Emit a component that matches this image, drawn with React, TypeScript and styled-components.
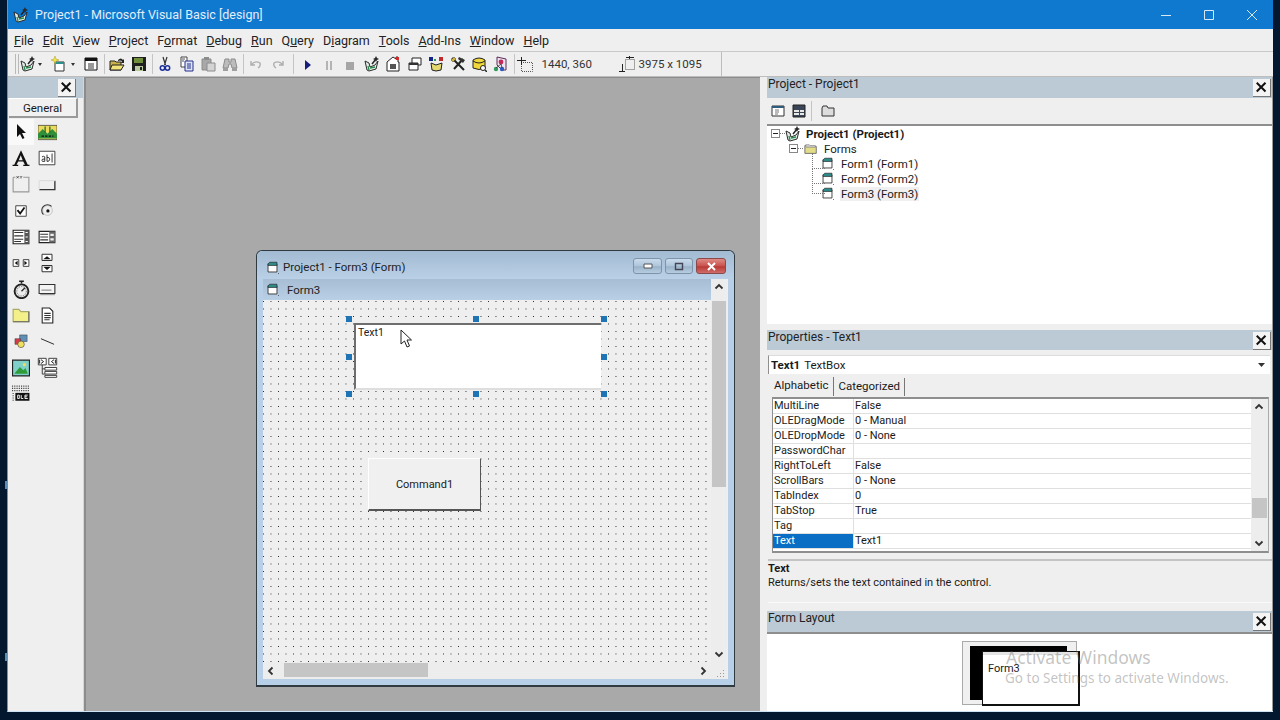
import React from 'react';
import styled, { createGlobalStyle } from 'styled-components';

const uiFont = '"Roboto", "Liberation Sans", sans-serif';

const GlobalStyle = createGlobalStyle`
  html, body {
    margin: 0;
    width: 1280px;
    height: 720px;
    overflow: hidden;
    background: #03182f;
    font-family: ${uiFont};
    color: #1a1a1a;
  }
  * { box-sizing: border-box; }
`;

const Desktop = styled.div`
  position: relative;
  width: 1280px;
  height: 720px;
  padding: 0 7px 8px;
  background: #03182f;
`;

const EdgeGlint = styled.div`
  position: absolute;
  left: 5px;
  top: ${p => p.$top}px;
  width: 2px;
  height: 8px;
  background: #5a8db8;
`;

const AppWindow = styled.div`
  position: relative;
  height: 712px;
  display: flex;
  flex-direction: column;
  background: #efefef;
  border-left: 1px solid #4f9bd8;
  border-bottom: 1px solid #cfe2f3;
`;

const TitleBar = styled.div`
  height: 29px;
  flex: none;
  display: flex;
  align-items: center;
  padding-left: 5px;
  background: #0f78cf;
  color: #e3eef8;
  font-size: 12.5px;
`;

const TitleText = styled.span`
  flex: 1;
  margin-left: 6px;
`;

const WinButton = styled.div`
  width: 43px;
  height: 29px;
  display: flex;
  align-items: center;
  justify-content: center;
`;

const MenuBar = styled.div`
  height: 23px;
  flex: none;
  display: flex;
  align-items: center;
  padding-left: 6px;
  gap: 9px;
  font-size: 12.5px;
  color: #222;
  border-bottom: 1px solid #c9c9c9;
`;

const Mnemonic = styled.span`
  text-decoration: underline;
  text-underline-offset: 1px;
`;

const ToolBar = styled.div`
  height: 25px;
  flex: none;
  display: flex;
  align-items: center;
  padding-left: 7px;
  border-bottom: 1px solid #bdbdbd;
  font-size: 11px;
  color: #333;
`;

const ToolGroup = styled.div`
  width: 707px;
  height: 24px;
  display: flex;
  align-items: center;
  border-right: 1px solid #bdbdbd;
`;

const Grip = styled.div`
  width: 4px;
  height: 20px;
  border-left: 1px solid #b8b8b8;
  border-right: 1px solid #b8b8b8;
`;

const ToolSep = styled.div`
  width: 1px;
  height: 20px;
  flex: none;
  margin: 0 ${p => p.$gap ?? 3}px;
  background: #c4c4c4;
`;

const ToolButton = styled.div`
  width: ${p => p.$w ?? 21.5}px;
  height: 22px;
  flex: none;
  display: flex;
  align-items: center;
  justify-content: center;
`;

const DropArrow = styled.div`
  width: 0;
  height: 0;
  flex: none;
  margin: 0 5px 0 1px;
  border: 2.5px solid transparent;
  border-top: 3px solid #333;
  border-bottom: none;
`;

const Readout = styled.div`
  width: ${p => p.$w}px;
  flex: none;
  display: flex;
  align-items: center;
  gap: ${p => p.$gap}px;
  font-size: 11.5px;
  white-space: nowrap;
`;

const Workspace = styled.div`
  flex: 1;
  min-height: 0;
  display: flex;
`;

const Toolbox = styled.div`
  width: 76px;
  flex: none;
  display: flex;
  flex-direction: column;
  border-right: 1px solid #d6d6d6;
`;

const DockHeader = styled.div`
  height: ${p => p.$h ?? 21}px;
  flex: none;
  display: flex;
  align-items: flex-start;
  justify-content: space-between;
  padding: 0 ${p => p.$right ?? 1}px 0 1px;
  background: #bccad6;
  font-size: 12px;
  line-height: 14px;
  color: #222;
`;

const CloseBox = styled.div`
  width: 18px;
  height: 18px;
  margin-top: 2px;
  flex: none;
  display: flex;
  align-items: center;
  justify-content: center;
  background: #f4f4f4;
  border-right: 1px solid #777;
  border-bottom: 1px solid #777;
`;

const GeneralTab = styled.div`
  width: 69px;
  height: 20px;
  margin-left: 1px;
  flex: none;
  display: flex;
  align-items: center;
  justify-content: center;
  font-size: 11.5px;
  background: #f1f1f1;
  border-top: 1px solid #fff;
  border-right: 2px solid #9a9a9a;
  border-bottom: 2px solid #9a9a9a;
`;

const ToolGrid = styled.div`
  display: grid;
  grid-template-columns: 26px 26px;
  grid-auto-rows: 26.2px;
  padding-top: 1px;
`;

const ToolCell = styled.div`
  display: flex;
  align-items: center;
  justify-content: center;
  background: ${p => (p.$active ? '#f9f9f9' : 'transparent')};
`;

const MdiArea = styled.div`
  position: relative;
  width: 676px;
  flex: none;
  background: #a9a9a9;
  border-left: 2px solid #8c8c8c;
  border-top: 1px solid #8c8c8c;
`;

const FormWindow = styled.div`
  position: absolute;
  left: 170px;
  top: 172px;
  width: 479px;
  height: 437px;
  display: flex;
  flex-direction: column;
  padding: 0 6px 6px;
  background: #b7d0e8;
  border: 1px solid #2f3b40;
  border-bottom-width: 2px;
  border-radius: 6px 6px 0 0;
`;

const FormTitle = styled.div`
  height: 28px;
  flex: none;
  display: flex;
  align-items: center;
  gap: 4px;
  margin: 0 -6px;
  padding: 4px 0 0 9px;
  font-size: 11.5px;
  color: #222;
  background: linear-gradient(#a3bbd2, #b9d0e7);
  border-radius: 6px 6px 0 0;
`;

const CaptionButtons = styled.div`
  margin: 0 8px 2px auto;
  display: flex;
  gap: 3px;
`;

const Caption = styled.div`
  width: ${p => p.$w}px;
  height: 16px;
  display: flex;
  align-items: center;
  justify-content: center;
  border: 1px solid ${p => (p.$close ? '#8a4a4a' : '#7d93aa')};
  border-radius: 3px;
  background: ${p =>
    p.$close
      ? 'linear-gradient(#e08a85 0%, #c9524d 50%, #b93a36 55%, #cf6d68 100%)'
      : 'linear-gradient(#c9dbec 0%, #aec5da 50%, #9ab3ca 55%, #b7cde0 100%)'};
`;

const FormBody = styled.div`
  flex: 1;
  min-height: 0;
  display: grid;
  grid-template-columns: 448px 16px;
  grid-template-rows: 1fr 17px;
  background: #efefef;
`;

const FormColumn = styled.div`
  display: flex;
  flex-direction: column;
  min-height: 0;
`;

const FormCaption = styled.div`
  height: 21px;
  flex: none;
  display: flex;
  align-items: center;
  gap: 8px;
  padding-left: 3px;
  font-size: 11.5px;
  color: #222;
  background: linear-gradient(#a6bdd4, #b9cfe5);
`;

const DesignCanvas = styled.div`
  position: relative;
  flex: 1;
  background-color: #efefef;
  background-image: radial-gradient(circle at 0.5px 0.5px, #222 0.5px, transparent 0.55px);
  background-size: 7.5px 7.5px;
  background-position: 0 1px;
`;

const TextBox = styled.div`
  position: absolute;
  left: 91px;
  top: 23px;
  width: 247px;
  height: 67px;
  padding: 1px 2px;
  font-size: 10.5px;
  line-height: 14px;
  color: #222;
  background: #fff;
  border-top: 2px solid #6e6e6e;
  border-left: 2px solid #6e6e6e;
  border-bottom: 2px solid #dedede;
`;

const Handle = styled.div`
  position: absolute;
  width: 6px;
  height: 6px;
  background: #1f74b5;
`;

const CommandBtn = styled.div`
  position: absolute;
  left: 105px;
  top: 158px;
  width: 113px;
  height: 53px;
  display: flex;
  align-items: center;
  justify-content: center;
  font-size: 11px;
  background: #f0f0f0;
  border-top: 1px solid #fff;
  border-left: 1px solid #fff;
  border-right: 1px solid #555;
  border-bottom: 2px solid #555;
`;

const CursorMark = styled.div`
  position: absolute;
  left: 137px;
  top: 29px;
  width: 13px;
  height: 20px;
`;

const VScroll = styled.div`
  display: flex;
  flex-direction: column;
  background: #ededed;
`;

const ScrollEnd = styled.div`
  width: ${p => p.$w ?? 16}px;
  height: ${p => p.$h ?? 16}px;
  flex: none;
  display: flex;
  align-items: center;
  justify-content: center;
`;

const VTrack = styled.div`
  flex: 1;
  padding: ${p => p.$top}px 1px ${p => p.$bottom}px;
  display: flex;
`;

const VThumb = styled.div`
  flex: 1;
  background: #c5c5c5;
`;

const HScroll = styled.div`
  display: flex;
  align-items: center;
  background: #ededed;
`;

const HTrack = styled.div`
  flex: 1;
  height: 100%;
  padding: 1px 0;
`;

const HThumb = styled.div`
  width: 144px;
  height: 14px;
  margin-left: 5px;
  background: #c5c5c5;
`;

const Corner = styled.div`
  display: flex;
  align-items: flex-end;
  justify-content: flex-end;
  background: #ededed;
  padding: 2px;
`;

const Splitter = styled.div`
  width: 7px;
  flex: none;
`;

const DockColumn = styled.div`
  flex: 1;
  min-width: 0;
  display: flex;
  flex-direction: column;
  border-right: 1px solid #9a9a9a;
`;

const ProjectPanel = styled.div`
  height: 253px;
  flex: none;
  display: flex;
  flex-direction: column;
`;

const PanelTools = styled.div`
  height: 26px;
  flex: none;
  display: flex;
  align-items: center;
`;

const TreeView = styled.div`
  height: 200px;
  flex: none;
  background: #fff;
  border-top: 2px solid #8e8e8e;
  font-size: 11.5px;
  overflow: hidden;
`;

const TreeRow = styled.div`
  position: relative;
  height: 15px;
  display: flex;
  align-items: center;
  padding-left: ${p => p.$indent}px;
  gap: ${p => p.$gap ?? 6}px;
  font-weight: ${p => (p.$bold ? 700 : 400)};
  &::before {
    content: ${p => (p.$branch ? '""' : 'none')};
    position: absolute;
    left: 45px;
    top: -3px;
    width: 12px;
    height: ${p => (p.$last ? '10px' : '15px')};
    border-left: 1px dotted #777;
    border-bottom: 1px dotted #777;
  }
`;

const Expander = styled.div`
  position: relative;
  width: 9px;
  height: 9px;
  flex: none;
  display: flex;
  align-items: center;
  justify-content: center;
  background: #fff;
  border: 1px solid #888;
  &::after {
    content: "";
    width: 5px;
    height: 1px;
    background: #222;
  }
  &::before {
    content: "";
    position: absolute;
    left: 8px;
    top: 3px;
    width: 5px;
    border-top: 1px dotted #777;
  }
`;

const RowLabel = styled.span`
  padding: 0 1px;
  white-space: nowrap;
  background: ${p => (p.$selected ? '#f0f0f0' : 'transparent')};
`;

const PropertiesPanel = styled.div`
  height: 281px;
  flex: none;
  display: flex;
  flex-direction: column;
`;

const ObjectCombo = styled.div`
  height: 19px;
  margin: 5px 2px 0 1px;
  flex: none;
  display: flex;
  align-items: center;
  justify-content: space-between;
  padding: 0 4px 0 2px;
  background: #fff;
  border-left: 1px solid #8e8e8e;
  border-top: 1px solid #dcdcdc;
  font-size: 11.5px;
`;

const ComboBold = styled.b`
  font-weight: 700;
  margin-right: 4px;
`;

const Tabs = styled.div`
  height: 20px;
  margin: 3px 0 0 5px;
  flex: none;
  display: flex;
  align-items: flex-start;
  font-size: 11.5px;
`;

const Tab = styled.div`
  height: ${p => (p.$active ? 19 : 18)}px;
  padding: 0 ${p => (p.$active ? '5px 0 2px' : '4px')};
  line-height: 16px;
  margin-top: ${p => (p.$active ? 0 : 1)}px;
  border-right: 1px solid #777;
`;

const GridFrame = styled.div`
  height: 156px;
  margin: 0 3px 0 5px;
  flex: none;
  display: flex;
  background: #fff;
  border-top: 2px solid #8e8e8e;
  border-left: 1px solid #8e8e8e;
  border-right: 1px solid #aaa;
  border-bottom: 2px solid #8e8e8e;
`;

const GridBody = styled.div`
  flex: 1;
  min-width: 0;
`;

const PropRow = styled.div`
  height: 15px;
  display: grid;
  grid-template-columns: 81px 1fr;
  font-size: 11px;
  line-height: 14px;
  border-bottom: 1px solid #dfdfdf;
`;

const PropName = styled.div`
  padding-left: 1px;
  border-right: 1px solid #dfdfdf;
  white-space: nowrap;
  color: ${p => (p.$selected ? '#fff' : '#222')};
  background: ${p => (p.$selected ? '#0a6fc4' : 'transparent')};
`;

const PropValue = styled.div`
  padding-left: 1px;
  white-space: nowrap;
`;

const GridScroll = styled(VScroll)`
  width: 17px;
  flex: none;
`;

const Description = styled.div`
  height: 44px;
  margin: 6px 0 0 1px;
  flex: none;
  padding: 1px 0 0;
  font-size: 11px;
  line-height: 14px;
  border-top: 2px solid #c4c4c4;
  border-bottom: 1px solid #fafafa;
`;

const DescTitle = styled.b`
  display: block;
  font-weight: 700;
`;

const FormLayoutPanel = styled.div`
  flex: 1;
  min-height: 0;
  display: flex;
  flex-direction: column;
`;

const LayoutCanvas = styled.div`
  position: relative;
  flex: 1;
  background: #fff;
  border-top: 2px solid #8e8e8e;
`;

const Monitor = styled.div`
  position: absolute;
  left: 195px;
  top: 7px;
  width: 115px;
  height: 64px;
  padding: 4px 9px 4px 7px;
  background: #f0f0f0;
  border: 1px solid #aaa;
`;

const MonitorScreen = styled.div`
  width: 100%;
  height: 100%;
  background: #000;
`;

const MiniForm = styled.div`
  position: absolute;
  left: 215px;
  top: 17px;
  width: 98px;
  height: 55px;
  padding: 10px 0 0 5px;
  font-size: 11px;
  line-height: 14px;
  background: #fff;
  border: 1px solid #111;
  border-bottom-width: 2px;
  border-right-width: 2px;
  box-shadow: inset 0 3px 0 #e4e4e4;
`;

const Watermark = styled.div`
  position: absolute;
  left: 1006px;
  top: 645px;
  font-family: "Noto Sans", sans-serif;
  color: rgba(110, 110, 110, 0.42);
  pointer-events: none;
`;

const WatermarkTitle = styled.div`
  font-size: 17.5px;
  line-height: 24px;
`;

const WatermarkHint = styled.div`
  font-size: 13.5px;
  line-height: 18px;
  margin-left: -1px;
`;

/* little drawings */
const Ico = ({ s = 16, children }: { s?: number; children: React.ReactNode }) => (
  <svg width={s} height={s} viewBox="0 0 16 16" style={{ display: 'block', flex: 'none' }}>{children}</svg>
);

const CloseX = () => (
  <Ico s={14}><path d="M2 2 L12 12 M12 2 L2 12" stroke="#111" strokeWidth="2.3" fill="none" /></Ico>
);

const VbLogo = () => (
  <Ico>
    <path d="M1 5 L5 7 L6 11 L11 9 L14 5 L12 13 L5 15 L3 14 Z" fill="#dfeee4" stroke="#2a2a2a" />
    <path d="M4 10 L5 14 M6 12 L11 11" stroke="#2c8a4e" strokeWidth="1.3" />
    <path d="M8 8 L12 3" stroke="#222" strokeWidth="1.5" />
    <path d="M12 0 L13 2 L15 3 L13 4 L12 6 L11 4 L9 3 L11 2 Z" fill="#2a2a2a" />
  </Ico>
);

const AddForm = () => (
  <Ico>
    <path d="M4 6 H13 V15 H4 Z" fill="#fff" stroke="#333" />
    <path d="M4 6 H13 V8 H4 Z" fill="#2f8f8f" />
    <path d="M4 0 L5 3 L8 4 L5 5 L4 8 L3 5 L0 4 L3 3 Z" fill="#f3e64a" stroke="#a89a20" strokeWidth=".5" />
  </Ico>
);

const MenuEd = () => (
  <Ico>
    <path d="M2 2 H14 V14 H2 Z" fill="#fff" stroke="#111" />
    <path d="M2 2 H14 V5 H2 Z" fill="#111" />
    <path d="M5 8 H11 M5 10 H11 M5 12 H11" stroke="#333" />
  </Ico>
);

const OpenFolder = () => (
  <Ico>
    <path d="M1 5 H6 L7 6 H12 V14 H1 Z" fill="#c9b04a" stroke="#222" />
    <path d="M3 9 H15 L12 14 H1 Z" fill="#f2e27a" stroke="#222" />
    <path d="M9 4 Q12 1 14 4 L15 3 V7 H12 L13 5 Q11 4 9 5Z" fill="#222" />
  </Ico>
);

const Floppy = () => (
  <Ico>
    <path d="M1 1 H15 V15 H1 Z" fill="#1f1f1f" />
    <path d="M3 2 H12 V7 H3 Z" fill="#6f8f3a" />
    <path d="M4 10 H12 V15 H4 Z" fill="#b9c9a0" />
    <path d="M9 11 H11 V14 H9 Z" fill="#1f1f1f" />
  </Ico>
);

const Scissors = () => (
  <Ico>
    <path d="M6 1 L8.5 9 M10 1 L7.5 9" stroke="#333" strokeWidth="1.2" />
    <circle cx="5.5" cy="12" r="2.2" fill="none" stroke="#1c2f9c" strokeWidth="1.5" />
    <circle cx="10.5" cy="12" r="2.2" fill="none" stroke="#1c2f9c" strokeWidth="1.5" />
  </Ico>
);

const CopyDocs = () => (
  <Ico>
    <path d="M2 1 H8 V11 H2 Z" fill="#fff" stroke="#444" />
    <path d="M6 5 H14 V15 H6 Z" fill="#dfe3f6" stroke="#23308a" />
    <path d="M8 8 H12 M8 10 H12 M8 12 H12" stroke="#23308a" />
    <path d="M3 3 H6 M3 5 H5" stroke="#555" />
  </Ico>
);

const PasteOff = () => (
  <Ico>
    <path d="M2 3 H11 V14 H2 Z" fill="#a8a8a8" stroke="#8c8c8c" />
    <path d="M4 1 H9 V4 H4 Z" fill="#8c8c8c" />
    <path d="M7 7 H15 V15 H7 Z" fill="#d4d4d4" stroke="#8c8c8c" />
  </Ico>
);

const Binoculars = () => (
  <Ico>
    <path d="M3 3 H7 V6 H9 V3 H13 L15 12 H10 L9 8 H7 L6 12 H1 Z" fill="#bcbcbc" stroke="#8c8c8c" />
    <path d="M1 12 H6 V15 H1 Z M10 12 H15 V15 H10 Z" fill="#9f9f9f" />
  </Ico>
);

const Undo = ({ flip }: { flip?: boolean }) => (
  <Ico>
    <g transform={flip ? 'translate(16 0) scale(-1 1)' : undefined}>
      <path d="M3 5 V9 H7 M3 9 Q7 4 12 7 Q13 10 10 12" fill="none" stroke="#aeaeae" strokeWidth="1.4" />
    </g>
  </Ico>
);

const Play = () => <Ico><path d="M5 4 L11 9 L5 14 Z" fill="#16207a" /></Ico>;
const Pause = () => <Ico><path d="M5 5 H7 V14 H5 Z M9 5 H11 V14 H9 Z" fill="#b4b4b4" /></Ico>;
const Stop = () => <Ico><path d="M4 6 H12 V14 H4 Z" fill="#a6a6a6" /></Ico>;

const PropsWin = () => (
  <Ico>
    <path d="M2 6 L8 1 L11 3 V1 H13 V6 H14 V15 H2 Z" fill="#fff" stroke="#222" />
    <path d="M5 8 H11 V13 H5 Z" fill="#555" />
    <path d="M11 1 H14 V4 H11 Z" fill="#d12a2a" />
  </Ico>
);

const LayoutWin = () => (
  <Ico>
    <path d="M5 2 H14 V9 H5 Z" fill="#fff" stroke="#222" />
    <path d="M2 7 H11 V14 H2 Z" fill="#fff" stroke="#222" />
    <path d="M2 7 H11 V9 H2 Z" fill="#333" />
  </Ico>
);

const ObjBrowser = () => (
  <Ico>
    <path d="M1 1 H5 V5 H1 Z" fill="#12238a" />
    <path d="M11 1 H15 V5 H11 Z" fill="#c12a2a" />
    <path d="M6 3 H8 V5 H6 Z" fill="#2c9c4a" />
    <path d="M3 7 L8 9 L14 7 L13 14 L8 15 L4 14 Z" fill="#e4da70" stroke="#222" />
  </Ico>
);

const Hammer = () => (
  <Ico>
    <path d="M2 2 L14 14 M13 3 L4 13" stroke="#222" strokeWidth="2" />
    <path d="M9 1 L15 4 L13 7 L8 3 Z" fill="#333" />
    <path d="M1 4 L4 1 L6 3 L3 6 Z" fill="#d0b23a" stroke="#333" strokeWidth=".5" />
  </Ico>
);

const DataView = () => (
  <Ico>
    <path d="M2 4 Q8 0 14 4 V12 Q8 15 2 12 Z" fill="#f0d83a" stroke="#222" />
    <path d="M2 5 Q8 9 14 5" fill="none" stroke="#222" />
    <circle cx="12" cy="12" r="2.5" fill="#fff" stroke="#222" />
    <path d="M14 14 L16 16" stroke="#222" strokeWidth="1.4" />
  </Ico>
);

const CompMgr = () => (
  <Ico>
    <path d="M4 1 L13 3 V14 H9 L4 9 Z" fill="#efe3ee" stroke="#5a2a5a" />
    <circle cx="8" cy="6" r="2.4" fill="#c22a5a" />
    <circle cx="3" cy="13" r="2.2" fill="#2f9c5a" />
    <circle cx="9" cy="13" r="2.2" fill="#2a5ac2" />
    <path d="M8 8 L3 12 M8 8 L9 12" stroke="#333" strokeWidth=".8" />
  </Ico>
);

const PosIcon = () => (
  <Ico>
    <path d="M4.5 1 V9 M0 4.5 H9" stroke="#222" />
    <path d="M6 6.5 H15.5 V15.5 H4.5 V10" fill="none" stroke="#555" strokeDasharray="1 1" />
  </Ico>
);

const SizeIcon = () => (
  <Ico>
    <path d="M6.5 3.5 H15.5 V13.5 H6.5 Z" fill="none" stroke="#555" strokeDasharray="1 1" />
    <path d="M7 1.5 H15 M3.5 8 V15 M10.5 0 V3 M0 15.5 H6" stroke="#222" />
  </Ico>
);

const FormMini = () => (
  <Ico s={13}>
    <path d="M2.5 3.5 H13.5 V13.5 H2.5 Z" fill="#fff" stroke="#222" />
    <path d="M2.5 3.5 L4.5 1.5 H13.5 V5.5 H2.5 Z" fill="#2f8a8a" stroke="#222" strokeWidth=".8" />
    <path d="M15 15 H16 V16 H15 Z" fill="#222" />
  </Ico>
);

const FormsFolder = () => (
  <Ico s={14}>
    <path d="M1 4 H6 L7 5 H14 V13 H1 Z" fill="#e4dd88" stroke="#666" />
    <path d="M2 3 H6 L7 4 H13 V6 H2 Z" fill="#ccc" stroke="#777" strokeWidth=".6" />
  </Ico>
);

const ViewCode = () => (
  <Ico>
    <path d="M2 3 H14 V13 H2 Z" fill="#fff" stroke="#333" />
    <path d="M2 3 H14 V5 H2 Z" fill="#2f5c7a" />
    <path d="M5 7 H9 M5 9 H9 M5 11 H8" stroke="#777" />
  </Ico>
);

const ViewObject = () => (
  <Ico>
    <path d="M2 2 H14 V14 H2 Z" fill="#3a4658" stroke="#222" />
    <path d="M3 7 H8 V9 H3 Z M9 7 H13 V9 H9 Z M3 10 H8 V12 H3 Z M9 10 H13 V12 H9 Z" fill="#e8e8e8" />
  </Ico>
);

const ToggleFolders = () => (
  <Ico>
    <path d="M2 5 L3 3 H7 L8 5 H14 V13 H2 Z" fill="#dcdcdc" stroke="#333" />
  </Ico>
);

const Chevron = ({ dir }: { dir: 'up' | 'down' | 'left' | 'right' }) => {
  const rot = { up: 0, right: 90, down: 180, left: 270 }[dir];
  return (
    <svg width="10" height="10" viewBox="0 0 10 10" style={{ display: 'block', transform: `rotate(${rot}deg)` }}>
      <path d="M1.5 6.5 L5 3 L8.5 6.5" fill="none" stroke="#333" strokeWidth="1.8" />
    </svg>
  );
};

const ComboArrow = () => (
  <svg width="9" height="6" viewBox="0 0 9 6"><path d="M1 1 H8 L4.5 5 Z" fill="#333" /></svg>
);

/* toolbox pictures */
const TPointer = () => <Ico><path d="M4 0 V13 L7 10 L9.5 15 L11.5 14 L9 9 H13 Z" fill="#111" /></Ico>;
const TPicture = () => (
  <Ico s={19}>
    <path d="M0 2 H16 V14 H0 Z" fill="#ecd85c" stroke="#333" strokeWidth=".6" />
    <path d="M0 9 L4 5 L8 9 L12 5 L16 9 V13 H0 Z" fill="#2f8f3a" />
    <path d="M3 11 H13" stroke="#111" strokeWidth="1" strokeDasharray="2 1" />
    <path d="M6 3 V8 M10 3 V8" stroke="#186a28" />
  </Ico>
);
const TLabel = () => <Ico s={18}><path d="M8 1 L14 14 H15.5 V15 H10 V14 H11.5 L10 11 H5.5 L4 14 H5.5 V15 H0.5 V14 H2 Z M6 10 H9.5 L7.8 5.5 Z" fill="#111" fillRule="evenodd" /></Ico>;
const TText = () => (
  <Ico s={18}>
    <path d="M1 2 H15 V14 H1 Z" fill="#fff" stroke="#333" strokeWidth=".8" />
    <path d="M3.5 7 Q5 6 6 7 V11 H4 Q3 10 4 9 H6 M8 5 V11 Q10 11.5 10.5 9 Q10 7 8 7.5 M12.5 4 V12" fill="none" stroke="#222" strokeWidth=".8" />
  </Ico>
);
const TFrame = () => (
  <Ico s={18}>
    <path d="M1 2 H3 M10 2 H15 V15 H1 V2" fill="none" stroke="#999" />
    <path d="M4 1 L6 3 M6 1 L4 3 M7 1 L8 2 L9 1 M8 2 V3" stroke="#333" strokeWidth=".7" fill="none" />
  </Ico>
);
const TCommand = () => <Ico s={18}><path d="M1 13 H15 V5" fill="none" stroke="#333" strokeWidth="1.2" /><path d="M1 5 H15 M1 5 V13" stroke="#ddd" /></Ico>;
const TCheck = () => (
  <Ico s={14}>
    <path d="M2 2 H14 V14 H2 Z" fill="#fff" stroke="#333" />
    <path d="M4 7 L7 11 L12 4" fill="none" stroke="#111" strokeWidth="2" />
  </Ico>
);
const TRadio = () => (
  <Ico s={13}>
    <path d="M3 13 A6 6 0 0 1 13 3" fill="none" stroke="#333" strokeWidth="1.4" />
    <circle cx="8" cy="8" r="6" fill="none" stroke="#999" strokeWidth=".6" />
    <circle cx="8.5" cy="8.5" r="2" fill="#111" />
  </Ico>
);
const TCombo = () => (
  <Ico s={18}>
    <path d="M1 2 H15 V14 H1 Z" fill="#fff" stroke="#222" />
    <path d="M2 4 H10 M2 7 H10 M2 10 H10 M2 12 H8" stroke="#333" />
    <path d="M11 2 H15 V14 H11 Z" fill="#555" />
    <path d="M12 4 H14 M12 8 H14 M12 12 H14" stroke="#fff" />
  </Ico>
);
const TList = () => (
  <Ico s={18}>
    <path d="M1 3 H15 V13 H1 Z" fill="#fff" stroke="#222" />
    <path d="M2 5.5 H9 M2 8 H9 M2 10.5 H9" stroke="#333" />
    <path d="M10 3 H15 V13 H10 Z" fill="#666" />
    <path d="M11 5 H14 V7 H11 Z M11 9 H14 V11 H11 Z" fill="#eee" />
  </Ico>
);
const THScroll = () => (
  <Ico s={18}>
    <path d="M1 5 H6 V11 H1 Z M10 5 H15 V11 H10 Z" fill="#fff" stroke="#333" strokeWidth=".8" />
    <path d="M5 6 L2.5 8 L5 10 Z M11 6 L13.5 8 L11 10 Z" fill="#111" />
  </Ico>
);
const TVScroll = () => (
  <Ico s={20}>
    <path d="M4 1 H12 V6 H4 Z M4 10 H12 V15 H4 Z" fill="#fff" stroke="#333" strokeWidth=".8" />
    <path d="M5 5 L8 2.5 L11 5 Z M5 11 L8 13.5 L11 11 Z" fill="#111" />
  </Ico>
);
const TTimer = () => (
  <Ico s={19}>
    <circle cx="8" cy="9.5" r="5.8" fill="#eee" stroke="#222" strokeWidth="1.6" />
    <path d="M6 1 H10 M8 1 V3" stroke="#222" strokeWidth="1.3" />
    <path d="M8 9.5 L11 6.5" stroke="#222" />
    <circle cx="8" cy="9.5" r="4" fill="none" stroke="#666" strokeWidth=".8" strokeDasharray="1 1" />
  </Ico>
);
const TDrive = () => (
  <Ico s={18}>
    <path d="M1 4 H15 V12 H1 Z" fill="#f4f4f4" stroke="#333" />
    <path d="M3 9 H12" stroke="#888" />
    <path d="M2 13 H15" stroke="#999" />
  </Ico>
);
const TFolder = () => (
  <Ico s={18}>
    <path d="M1 3 H6 L8 5 H15 V14 H1 Z" fill="#f3f08a" stroke="#a8a86a" />
    <path d="M1 14 H15 V5" fill="none" stroke="#666" />
  </Ico>
);
const TFile = () => (
  <Ico s={17}>
    <path d="M3 1 H10 L13 4 V15 H3 Z" fill="#fff" stroke="#222" />
    <path d="M5 6 H11 M5 8 H11 M5 10 H11 M5 12 H10" stroke="#333" />
  </Ico>
);
const TShape = () => (
  <Ico s={15}>
    <path d="M6 1 H14 V8 H6 Z" fill="#5f8fb4" stroke="#333" strokeWidth=".5" />
    <path d="M1 5 H7 V11 H1 Z" fill="#d83a4a" stroke="#333" strokeWidth=".5" />
    <circle cx="7.5" cy="11" r="3.5" fill="#f0e060" stroke="#333" strokeWidth=".6" />
  </Ico>
);
const TLine = () => <Ico s={15}><path d="M1 5 L15 11" stroke="#222" /></Ico>;
const TImage = () => (
  <Ico s={18}>
    <path d="M0.5 1 H15.5 V15 H0.5 Z" fill="#7fd0c8" stroke="#222" />
    <path d="M2 13 L7 7 L10 10 L12 8 L14 13 Z" fill="#2f9c3a" />
    <circle cx="11" cy="5" r="1.4" fill="#f0e060" />
  </Ico>
);
const TData = () => (
  <Ico s={21}>
    <path d="M1 1 H7 V6 H1 Z M9 1 H15 V6 H9 Z" fill="#fff" stroke="#333" strokeWidth=".7" />
    <path d="M2 2 V5 M3 2 L5 3.5 L3 5 M14 2 V5 M13 2 L11 3.5 L13 5" fill="none" stroke="#111" strokeWidth=".7" />
    <path d="M4 6 V13 H6 M4 9 H6" fill="none" stroke="#333" strokeWidth=".7" />
    <path d="M6 8 H15 V10 H6 Z M6 11 H15 V13 H6 Z M6 14 H15 V15.5 H6 Z" fill="#fff" stroke="#333" strokeWidth=".7" />
  </Ico>
);
const TOle = () => (
  <Ico s={18}>
    <path d="M0 1 H15 M0 3 H15 M0 5 H15 M1 7 V15" stroke="#444" strokeDasharray="1 1" />
    <path d="M3 7 H15.5 V14 H3 Z" fill="#111" />
    <path d="M5 9 V12 H6.5 V9 Z M8.2 9 V12 H10 M11.5 9 V12 H14 M11.5 10.5 H13.5 M11.5 9 H14" fill="none" stroke="#fff" strokeWidth=".8" />
  </Ico>
);

const menus: [string, number][] = [
  ['File', 0], ['Edit', 0], ['View', 0], ['Project', 0], ['Format', 1], ['Debug', 0], ['Run', 0],
  ['Query', 1], ['Diagram', 1], ['Tools', 0], ['Add-Ins', 0], ['Window', 0], ['Help', 0],
];

const toolboxItems = [
  TPointer, TPicture, TLabel, TText, TFrame, TCommand, TCheck, TRadio, TCombo, TList,
  THScroll, TVScroll, TTimer, TDrive, TFolder, TFile, TShape, TLine, TImage, TData, TOle,
];

const properties = [
  ['MultiLine', 'False'],
  ['OLEDragMode', '0 - Manual'],
  ['OLEDropMode', '0 - None'],
  ['PasswordChar', ''],
  ['RightToLeft', 'False'],
  ['ScrollBars', '0 - None'],
  ['TabIndex', '0'],
  ['TabStop', 'True'],
  ['Tag', ''],
  ['Text', 'Text1'],
];

const handleSpots = [
  [86, 19], [213, 19], [341, 19],
  [86, 56.5], [341, 56.5],
  [86, 94], [213, 94], [341, 94],
];

export default function App() {
  return (
    <>
      <GlobalStyle />
      <Desktop>
        <EdgeGlint $top={481} />
        <EdgeGlint $top={653} />
        <AppWindow>
          <TitleBar>
            <VbLogo />
            <TitleText>Project1 - Microsoft Visual Basic [design]</TitleText>
            <WinButton><svg width="12" height="12"><path d="M1 6.5 H11" stroke="#d8e8f6" /></svg></WinButton>
            <WinButton><svg width="12" height="12"><path d="M1.5 1.5 H10.5 V10.5 H1.5 Z" fill="none" stroke="#d8e8f6" /></svg></WinButton>
            <WinButton><svg width="12" height="12"><path d="M1 1 L11 11 M11 1 L1 11" stroke="#d8e8f6" /></svg></WinButton>
          </TitleBar>

          <MenuBar>
            {menus.map(([label, at]) => (
              <span key={label}>
                {label.slice(0, at)}<Mnemonic>{label[at]}</Mnemonic>{label.slice(at + 1)}
              </span>
            ))}
          </MenuBar>

          <ToolBar>
            <ToolGroup>
              <Grip />
              <ToolButton $w={18}><VbLogo /></ToolButton>
              <DropArrow />
              <ToolButton $w={23}><AddForm /></ToolButton>
              <DropArrow />
              <ToolButton><MenuEd /></ToolButton>
              <ToolSep $gap={2} />
              <ToolButton><OpenFolder /></ToolButton>
              <ToolButton><Floppy /></ToolButton>
              <ToolSep $gap={2} />
              <ToolButton><Scissors /></ToolButton>
              <ToolButton><CopyDocs /></ToolButton>
              <ToolButton><PasteOff /></ToolButton>
              <ToolButton><Binoculars /></ToolButton>
              <ToolSep $gap={2} />
              <ToolButton><Undo /></ToolButton>
              <ToolButton><Undo flip /></ToolButton>
              <ToolSep $gap={4} />
              <ToolButton $w={21}><Play /></ToolButton>
              <ToolButton $w={21}><Pause /></ToolButton>
              <ToolButton $w={21}><Stop /></ToolButton>
              <ToolButton $w={22}><VbLogo /></ToolButton>
              <ToolButton><PropsWin /></ToolButton>
              <ToolButton><LayoutWin /></ToolButton>
              <ToolButton><ObjBrowser /></ToolButton>
              <ToolButton><Hammer /></ToolButton>
              <ToolButton><DataView /></ToolButton>
              <ToolButton><CompMgr /></ToolButton>
              <ToolSep $gap={2} />
              <Readout $w={102} $gap={9}><PosIcon />1440, 360</Readout>
              <Readout $w={80} $gap={4}><SizeIcon />3975 x 1095</Readout>
            </ToolGroup>
          </ToolBar>

          <Workspace>
            <Toolbox>
              <DockHeader $right={7}>
                <span />
                <CloseBox><CloseX /></CloseBox>
              </DockHeader>
              <GeneralTab>General</GeneralTab>
              <ToolGrid>
                {toolboxItems.map((Item, i) => (
                  <ToolCell key={i} $active={i === 0}><Item /></ToolCell>
                ))}
              </ToolGrid>
            </Toolbox>

            <MdiArea>
              <FormWindow>
                <FormTitle>
                  <FormMini />
                  Project1 - Form3 (Form)
                  <CaptionButtons>
                    <Caption $w={29}><svg width="10" height="6"><path d="M1 1 H9 V5 H1 Z" fill="#fff" stroke="#555" /></svg></Caption>
                    <Caption $w={28}><svg width="10" height="9"><path d="M1.5 1.5 H8.5 V7.5 H1.5 Z" fill="none" stroke="#445" strokeWidth="1.4" /></svg></Caption>
                    <Caption $w={30} $close><svg width="11" height="9"><path d="M2 1 L9 8 M9 1 L2 8" stroke="#fff" strokeWidth="2" /></svg></Caption>
                  </CaptionButtons>
                </FormTitle>
                <FormBody>
                  <FormColumn>
                    <FormCaption>
                      <FormMini />
                      Form3
                    </FormCaption>
                    <DesignCanvas>
                      <TextBox>Text1</TextBox>
                      {handleSpots.map(([x, y]) => (
                        <Handle key={`${x}-${y}`} style={{ left: x - 3, top: y - 3 }} />
                      ))}
                      <CommandBtn>Command1</CommandBtn>
                      <CursorMark>
                        <svg width="13" height="20" viewBox="0 0 13 20">
                          <path d="M1 1 V15 L4.5 12 L7 18 L9.5 17 L7 11 H11.5 Z" fill="#fff" stroke="#222" strokeWidth="1" />
                        </svg>
                      </CursorMark>
                    </DesignCanvas>
                  </FormColumn>
                  <VScroll>
                    <ScrollEnd><Chevron dir="up" /></ScrollEnd>
                    <VTrack $top={6} $bottom={159}><VThumb /></VTrack>
                    <ScrollEnd><Chevron dir="down" /></ScrollEnd>
                  </VScroll>
                  <HScroll>
                    <ScrollEnd><Chevron dir="left" /></ScrollEnd>
                    <HTrack><HThumb /></HTrack>
                    <ScrollEnd><Chevron dir="right" /></ScrollEnd>
                  </HScroll>
                  <Corner>
                    <svg width="8" height="8"><path d="M6 1 H7 V2 H6 Z M3 4 H4 V5 H3 Z M6 4 H7 V5 H6 Z M0 7 H1 V8 H0 Z M3 7 H4 V8 H3 Z M6 7 H7 V8 H6 Z" fill="#999" /></svg>
                  </Corner>
                </FormBody>
              </FormWindow>
            </MdiArea>

            <Splitter />

            <DockColumn>
              <ProjectPanel>
                <DockHeader>
                  <span>Project - Project1</span>
                  <CloseBox><CloseX /></CloseBox>
                </DockHeader>
                <PanelTools>
                  <ToolButton><ViewCode /></ToolButton>
                  <ToolButton><ViewObject /></ToolButton>
                  <ToolSep $gap={1} />
                  <ToolButton $w={30}><ToggleFolders /></ToolButton>
                </PanelTools>
                <TreeView>
                  <TreeRow $indent={4} $gap={4.5} $bold>
                    <Expander /><VbLogo /><RowLabel>Project1 (Project1)</RowLabel>
                  </TreeRow>
                  <TreeRow $indent={22} $gap={5.5}>
                    <Expander /><FormsFolder /><RowLabel>Forms</RowLabel>
                  </TreeRow>
                  <TreeRow $indent={54} $branch><FormMini /><RowLabel>Form1 (Form1)</RowLabel></TreeRow>
                  <TreeRow $indent={54} $branch><FormMini /><RowLabel>Form2 (Form2)</RowLabel></TreeRow>
                  <TreeRow $indent={54} $branch $last><FormMini /><RowLabel $selected>Form3 (Form3)</RowLabel></TreeRow>
                </TreeView>
              </ProjectPanel>

              <PropertiesPanel>
                <DockHeader $h={20}>
                  <span>Properties - Text1</span>
                  <CloseBox><CloseX /></CloseBox>
                </DockHeader>
                <ObjectCombo>
                  <span><ComboBold>Text1</ComboBold>TextBox</span>
                  <ComboArrow />
                </ObjectCombo>
                <Tabs>
                  <Tab $active>Alphabetic</Tab>
                  <Tab>Categorized</Tab>
                </Tabs>
                <GridFrame>
                  <GridBody>
                    {properties.map(([name, value]) => (
                      <PropRow key={name}>
                        <PropName $selected={name === 'Text'}>{name}</PropName>
                        <PropValue>{value}</PropValue>
                      </PropRow>
                    ))}
                  </GridBody>
                  <GridScroll>
                    <ScrollEnd><Chevron dir="up" /></ScrollEnd>
                    <VTrack $top={83} $bottom={17}><VThumb /></VTrack>
                    <ScrollEnd><Chevron dir="down" /></ScrollEnd>
                  </GridScroll>
                </GridFrame>
                <Description>
                  <DescTitle>Text</DescTitle>
                  Returns/sets the text contained in the control.
                </Description>
              </PropertiesPanel>

              <FormLayoutPanel>
                <DockHeader>
                  <span>Form Layout</span>
                  <CloseBox><CloseX /></CloseBox>
                </DockHeader>
                <LayoutCanvas>
                  <Monitor><MonitorScreen /></Monitor>
                  <MiniForm>Form3</MiniForm>
                </LayoutCanvas>
              </FormLayoutPanel>
            </DockColumn>
          </Workspace>
        </AppWindow>
        <Watermark>
          <WatermarkTitle>Activate Windows</WatermarkTitle>
          <WatermarkHint>Go to Settings to activate Windows.</WatermarkHint>
        </Watermark>
      </Desktop>
    </>
  );
}
